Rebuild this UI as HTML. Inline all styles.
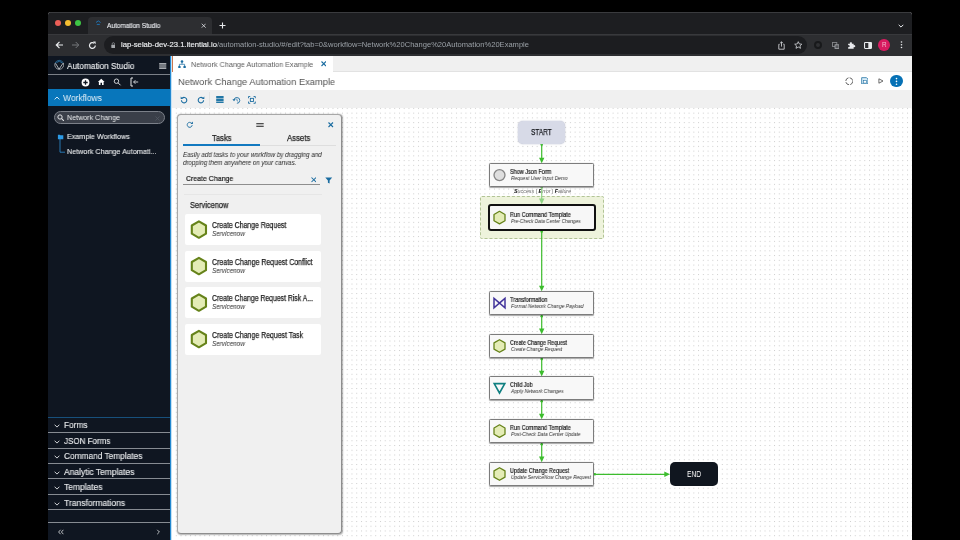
<!DOCTYPE html>
<html lang="en"><head><meta charset="utf-8"><title>Automation Studio</title>
<style>
*{box-sizing:border-box;margin:0;padding:0}
html,body{width:960px;height:540px;background:#000;overflow:hidden;font-family:"Liberation Sans",sans-serif}
.a{position:absolute}
.t{will-change:transform;position:absolute;white-space:nowrap;line-height:1;transform-origin:0 0}
#cv{background-color:#fff}
</style></head><body>
<div class="a" style="left:48.00px;top:12.00px;width:864.00px;height:528.00px;background:#f0f0f0;border-radius:3px 3px 0 0;"></div>
<div class="a" style="left:48.00px;top:12.00px;width:864.00px;height:22.40px;background:#1d1e21;border-radius:3px 3px 0 0;"></div>
<div class="a" style="left:48.00px;top:34.40px;width:864.00px;height:21.20px;background:#2d2e31;"></div>
<div class="a" style="left:48.00px;top:34.30px;width:864.00px;height:0.60px;background:#38393c;"></div>
<div class="a" style="left:50.00px;top:12.00px;width:860.00px;height:0.60px;background:#3a3b3e;"></div>
<div class="a" style="left:88.00px;top:17.30px;width:124.00px;height:17.20px;background:#2d2e31;border-radius:4px 4px 0 0;"></div>
<div class="a" style="left:54.55px;top:20.35px;width:6.10px;height:6.10px;background:#ec5f57;border-radius:50%;"></div>
<div class="a" style="left:64.95px;top:20.35px;width:6.10px;height:6.10px;background:#f4bd30;border-radius:50%;"></div>
<div class="a" style="left:75.35px;top:20.35px;width:6.10px;height:6.10px;background:#3ec544;border-radius:50%;"></div>
<svg class="a" style="left:95.30px;top:20.30px" width="6.60" height="6.70" viewBox="0 0 6 7"><path d="M0.6 2.6 L3 0.9 L5.4 2.6 M1.4 4.6 H4.6" stroke="#1e74b8" stroke-width="1" fill="none"/></svg>
<div class="t" style="left:106.70px;top:22.63px;font-size:6.7px;color:#e4e6ea;transform:scaleX(0.9735);-webkit-text-stroke:0.150px #e4e6ea;">Automation Studio</div>
<svg class="a" style="left:200.50px;top:22.60px" width="5.40" height="5.40" viewBox="0 0 6 6"><path d="M0.8 0.8 L5.2 5.2 M5.2 0.8 L0.8 5.2" stroke="#dfe1e5" stroke-width="0.9"/></svg>
<svg class="a" style="left:219.30px;top:21.70px" width="7.00" height="7.00" viewBox="0 0 7 7"><path d="M3.5 0.5 V6.5 M0.5 3.5 H6.5" stroke="#e8eaed" stroke-width="1.1"/></svg>
<svg class="a" style="left:897.50px;top:23.50px" width="6.00" height="4.00" viewBox="0 0 6 4"><path d="M0.7 0.8 L3 3.1 L5.3 0.8" stroke="#e8eaed" stroke-width="1" fill="none"/></svg>
<div class="a" style="left:104.00px;top:35.70px;width:703.00px;height:18.50px;background:#1c1d20;border-radius:9.200px;"></div>
<svg class="a" style="left:55.00px;top:40.60px" width="9.00" height="8.00" viewBox="0 0 9 8"><path d="M8 4 H1.5 M4.500 0.800 L1.300 4 L4.500 7.200" stroke="#eceef0" stroke-width="1.200" fill="none"/></svg>
<svg class="a" style="left:71.00px;top:40.50px" width="9.00" height="8.00" viewBox="0 0 9 8"><path d="M1 4 H7.5 M4.7 1 L7.7 4 L4.7 7" stroke="#77797d" stroke-width="1" fill="none"/></svg>
<svg class="a" style="left:88.20px;top:40.60px" width="9.00" height="9.00" viewBox="0 0 9 9"><path d="M7.3 4.5 A2.900 2.900 0 1 1 6.300 2.300" stroke="#eceef0" stroke-width="1.200" fill="none"/><path d="M5 0.600 H7.600 V3.200 Z" fill="#e8eaed"/></svg>
<svg class="a" style="left:110.50px;top:41.70px" width="4.70" height="6.10" viewBox="0 0 5 6.5"><rect x="0.300" y="2.800" width="4.400" height="3.500" rx="0.500" fill="#a4a7ab"/><path d="M1.300 2.800 V1.900 A1.200 1.200 0 0 1 3.700 1.900 V2.800" stroke="#a4a7ab" stroke-width="0.700" fill="none"/></svg>
<div class="t" style="left:120.80px;top:41.05px;font-size:7.5px;color:#eceef0;transform:scaleX(1.0223);-webkit-text-stroke:0.150px #eceef0;">iap-selab-dev-23.1.itential.io</div>
<div class="t" style="left:216.70px;top:41.05px;font-size:7.5px;color:#9aa0a6;transform:scaleX(1.0072);">/automation-studio/#/edit?tab=0&amp;workflow=Network%20Change%20Automation%20Example</div>
<svg class="a" style="left:777.50px;top:40.50px" width="7.00" height="9.00" viewBox="0 0 7 9"><path d="M1.600 3.300 H0.800 V8.200 H6.200 V3.300 H5.400 M3.500 5.600 V0.800 M2.100 2.200 L3.500 0.800 L4.900 2.200" stroke="#dfe1e5" stroke-width="0.800" fill="none"/></svg>
<svg class="a" style="left:793.50px;top:41.00px" width="8.50" height="8.00" viewBox="0 0 9 8.500"><path d="M4.500 0.700 L5.600 3.100 L8.300 3.400 L6.300 5.200 L6.900 7.800 L4.500 6.400 L2.100 7.800 L2.700 5.200 L0.700 3.400 L3.400 3.100 Z" stroke="#dfe1e5" stroke-width="0.800" fill="none"/></svg>
<div class="a" style="left:814.30px;top:41.00px;width:8.00px;height:8.00px;background:#2f3033;border-radius:50%;border:2px solid #18191b;"></div>
<svg class="a" style="left:831.50px;top:41.50px" width="7.50" height="7.00" viewBox="0 0 7.500 7"><rect x="0.500" y="0.500" width="4.300" height="4" fill="none" stroke="#85878b" stroke-width="0.900"/><rect x="3" y="2.800" width="4" height="3.700" fill="#55575b" stroke="#a9abaf" stroke-width="0.800"/></svg>
<svg class="a" style="left:847.00px;top:41.00px" width="8.50" height="8.00" viewBox="0 0 9 9"><path d="M1 3 H3 A1.200 1.200 0 1 1 5.200 3 H7.200 V4.800 A1.200 1.200 0 1 1 7.200 6.800 V8.600 H1 V6.600 A1.100 1.100 0 1 0 1 4.900 Z" fill="#e8eaed"/></svg>
<svg class="a" style="left:863.50px;top:41.50px" width="8.00" height="7.00" viewBox="0 0 8 7"><rect x="0.550" y="0.550" width="6.900" height="5.900" rx="0.600" fill="none" stroke="#e8eaed" stroke-width="1.100"/><rect x="4.300" y="0.550" width="3.150" height="5.900" fill="#e8eaed"/></svg>
<div class="a" style="left:878.40px;top:39.20px;width:11.60px;height:11.60px;background:#d81b60;border-radius:50%;"></div>
<div class="t" style="left:881.90px;top:41.87px;font-size:6.3px;color:#f3b9cd;transform:scaleX(1.0111);">R</div>
<svg class="a" style="left:899.50px;top:41.00px" width="3.00" height="7.50" viewBox="0 0 3 7.500"><circle cx="1.500" cy="1" r="0.800" fill="#e8eaed"/><circle cx="1.500" cy="3.750" r="0.800" fill="#e8eaed"/><circle cx="1.500" cy="6.500" r="0.800" fill="#e8eaed"/></svg>
<div class="a" style="left:48.00px;top:55.60px;width:122.00px;height:484.40px;background:#0f1621;"></div>
<div class="a" style="left:170.00px;top:55.60px;width:1.40px;height:484.40px;background:#2288d0;"></div>
<div class="a" style="left:171.40px;top:55.60px;width:0.90px;height:484.40px;background:#c4e1f5;"></div>
<svg class="a" style="left:53.50px;top:59.00px" width="10.50" height="11.50" viewBox="0 0 11 12"><path d="M1.200 4.200 A4.700 4.700 0 1 0 9.800 4.200" fill="none" stroke="#d5d8db" stroke-width="0.700"/><path d="M1.200 4.200 A4.700 4.700 0 0 1 9.800 4.200" fill="none" stroke="#2c6f9f" stroke-width="0.850"/><path d="M2.600 3.900 L5.500 2.300 L8.400 3.900" fill="none" stroke="#2c7fb8" stroke-width="0.800"/><path d="M1.700 4.600 L5.300 10.600 L9.600 4.200" fill="none" stroke="#e6e8ea" stroke-width="0.750"/></svg>
<div class="t" style="left:67.20px;top:60.59px;font-size:9.7px;color:#e9ebed;transform:scaleX(0.8515);-webkit-text-stroke:0.15px #e9ebed;">Automation Studio</div>
<svg class="a" style="left:159.00px;top:62.60px" width="7.50" height="6.00" viewBox="0 0 7.500 6"><path d="M0.200 0.900 H7.300 M0.200 3 H7.300 M0.200 5.100 H7.300" stroke="#d9dcdf" stroke-width="1.100"/></svg>
<div class="a" style="left:48.00px;top:74.20px;width:122.00px;height:1.00px;background:#7b8088;"></div>
<svg class="a" style="left:80.80px;top:77.50px" width="9.00" height="9.00" viewBox="0 0 9 9"><circle cx="4.500" cy="4.500" r="3.900" fill="#fff"/><path d="M4.500 2.300 V6.700 M2.300 4.500 H6.700" stroke="#0f1621" stroke-width="1.300"/></svg>
<svg class="a" style="left:97.30px;top:78.00px" width="8.50" height="7.60" viewBox="0 0 9 9"><path d="M4.500 0.800 L8.500 4.600 H7.300 V8.200 H5.400 V5.600 H3.600 V8.200 H1.700 V4.600 H0.500 Z" fill="#fff"/></svg>
<svg class="a" style="left:113.20px;top:78.20px" width="8.50" height="8.00" viewBox="0 0 9 9"><circle cx="3.600" cy="3.600" r="2.500" fill="none" stroke="#e6e8ea" stroke-width="1"/><path d="M5.500 5.500 L8.200 8.200" stroke="#e6e8ea" stroke-width="1.100"/></svg>
<svg class="a" style="left:129.50px;top:77.00px" width="9.00" height="10.00" viewBox="0 0 9 10"><path d="M3 1 H1 V9 H3" fill="none" stroke="#e6e8ea" stroke-width="1"/><path d="M8.200 5 H3.600 M5.400 3.200 L3.600 5 L5.400 6.800" fill="none" stroke="#c8cbcf" stroke-width="1"/></svg>
<div class="a" style="left:48.00px;top:89.30px;width:122.00px;height:16.50px;background:#0876bb;"></div>
<svg class="a" style="left:54.00px;top:96.00px" width="6.00" height="4.00" viewBox="0 0 6 4"><path d="M0.600 3.400 L3 1 L5.400 3.400" fill="none" stroke="#e9f3fa" stroke-width="0.900"/></svg>
<div class="t" style="left:63.30px;top:93.07px;font-size:9.6px;color:#e6f1f9;transform:scaleX(0.8822);">Workflows</div>
<div class="a" style="left:54.20px;top:111.30px;width:111.10px;height:12.90px;background:#3a3f49;border-radius:6.500px;border:1px solid #7b8089;"></div>
<svg class="a" style="left:56.80px;top:113.90px" width="7.50" height="7.50" viewBox="0 0 7 7"><circle cx="2.800" cy="2.800" r="2" fill="none" stroke="#e6e8ea" stroke-width="0.900"/><path d="M4.300 4.300 L6.500 6.500" stroke="#e6e8ea" stroke-width="1"/></svg>
<div class="t" style="left:66.70px;top:114.20px;font-size:7.8px;color:#eceef0;transform:scaleX(0.9123);">Network Change</div>
<svg class="a" style="left:155.00px;top:115.50px" width="5.00" height="5.00" viewBox="0 0 5 5"><path d="M0.500 0.500 L4.500 4.500 M4.500 0.500 L0.500 4.500" stroke="#565c66" stroke-width="0.700"/></svg>
<svg class="a" style="left:57.00px;top:134.00px" width="10.00" height="22.00" viewBox="0 0 10 22"><path d="M3 4.500 V18.200 H8" fill="none" stroke="#2d8fd6" stroke-width="0.800"/><path d="M0.900 0.800 H2.900 L3.400 1.300 H6.300 V5.200 H0.900 Z" fill="#2d9be6"/></svg>
<div class="t" style="left:67.20px;top:132.77px;font-size:7.6px;color:#e9ebed;transform:scaleX(0.9431);-webkit-text-stroke:0.11px #e9ebed;">Example Workflows</div>
<div class="t" style="left:67.20px;top:148.27px;font-size:7.6px;color:#e9ebed;transform:scaleX(0.9458);-webkit-text-stroke:0.11px #e9ebed;">Network Change Automati...</div>
<div class="a" style="left:48.00px;top:416.60px;width:122.00px;height:1.20px;background:#17507c;"></div>
<div class="t" style="left:63.70px;top:421.28px;font-size:9.0px;color:#e9ebed;transform:scaleX(0.9217);-webkit-text-stroke:0.14px #e9ebed;">Forms</div>
<svg class="a" style="left:54.00px;top:424.30px" width="6.00" height="4.00" viewBox="0 0 6 4"><path d="M0.600 0.700 L3 3.100 L5.400 0.700" fill="none" stroke="#e6e8ea" stroke-width="0.900"/></svg>
<div class="a" style="left:48.00px;top:432.10px;width:122.00px;height:1.00px;background:#868b92;"></div>
<div class="t" style="left:63.70px;top:436.78px;font-size:9.0px;color:#e9ebed;transform:scaleX(0.8904);-webkit-text-stroke:0.14px #e9ebed;">JSON Forms</div>
<svg class="a" style="left:54.00px;top:439.80px" width="6.00" height="4.00" viewBox="0 0 6 4"><path d="M0.600 0.700 L3 3.100 L5.400 0.700" fill="none" stroke="#e6e8ea" stroke-width="0.900"/></svg>
<div class="a" style="left:48.00px;top:447.55px;width:122.00px;height:1.00px;background:#868b92;"></div>
<div class="t" style="left:63.70px;top:452.28px;font-size:9.0px;color:#e9ebed;transform:scaleX(0.9249);-webkit-text-stroke:0.14px #e9ebed;">Command Templates</div>
<svg class="a" style="left:54.00px;top:455.30px" width="6.00" height="4.00" viewBox="0 0 6 4"><path d="M0.600 0.700 L3 3.100 L5.400 0.700" fill="none" stroke="#e6e8ea" stroke-width="0.900"/></svg>
<div class="a" style="left:48.00px;top:463.00px;width:122.00px;height:1.00px;background:#868b92;"></div>
<div class="t" style="left:63.70px;top:467.78px;font-size:9.0px;color:#e9ebed;transform:scaleX(0.9416);-webkit-text-stroke:0.14px #e9ebed;">Analytic Templates</div>
<svg class="a" style="left:54.00px;top:470.80px" width="6.00" height="4.00" viewBox="0 0 6 4"><path d="M0.600 0.700 L3 3.100 L5.400 0.700" fill="none" stroke="#e6e8ea" stroke-width="0.900"/></svg>
<div class="a" style="left:48.00px;top:478.45px;width:122.00px;height:1.00px;background:#868b92;"></div>
<div class="t" style="left:63.70px;top:483.28px;font-size:9.0px;color:#e9ebed;transform:scaleX(0.9386);-webkit-text-stroke:0.14px #e9ebed;">Templates</div>
<svg class="a" style="left:54.00px;top:486.30px" width="6.00" height="4.00" viewBox="0 0 6 4"><path d="M0.600 0.700 L3 3.100 L5.400 0.700" fill="none" stroke="#e6e8ea" stroke-width="0.900"/></svg>
<div class="a" style="left:48.00px;top:493.90px;width:122.00px;height:1.00px;background:#868b92;"></div>
<div class="t" style="left:63.70px;top:498.78px;font-size:9.0px;color:#e9ebed;transform:scaleX(0.9430);-webkit-text-stroke:0.14px #e9ebed;">Transformations</div>
<svg class="a" style="left:54.00px;top:501.80px" width="6.00" height="4.00" viewBox="0 0 6 4"><path d="M0.600 0.700 L3 3.100 L5.400 0.700" fill="none" stroke="#e6e8ea" stroke-width="0.900"/></svg>
<div class="a" style="left:48.00px;top:509.35px;width:122.00px;height:1.00px;background:#868b92;"></div>
<div class="a" style="left:48.00px;top:522.00px;width:122.00px;height:1.00px;background:#868b92;"></div>
<svg class="a" style="left:57.50px;top:528.50px" width="6.00" height="6.00" viewBox="0 0 6 6"><path d="M2.600 0.800 L0.600 3 L2.600 5.200 M5.400 0.800 L3.400 3 L5.400 5.200" fill="none" stroke="#e6e8ea" stroke-width="0.800"/></svg>
<svg class="a" style="left:156.00px;top:528.50px" width="5.00" height="6.00" viewBox="0 0 5 6"><path d="M1.200 0.800 L3.400 3 L1.200 5.200" fill="none" stroke="#e6e8ea" stroke-width="0.800"/></svg>
<div class="a" style="left:172.00px;top:55.60px;width:161.30px;height:16.30px;background:#fff;border-left:1.100px solid #c9774f;"></div>
<div class="a" style="left:333.30px;top:71.00px;width:578.70px;height:0.70px;background:#e2e2e2;"></div>
<div class="a" style="left:172.30px;top:71.70px;width:739.70px;height:18.10px;background:#fff;"></div>
<svg class="a" style="left:178.00px;top:59.50px" width="8.00" height="8.50" viewBox="0 0 8 8.500"><g fill="#1a6ca0"><circle cx="4" cy="1.500" r="1.300"/><circle cx="1.400" cy="7" r="1.300"/><circle cx="6.600" cy="7" r="1.300"/></g><path d="M4 2 V4.300 M1.400 6.500 V4.300 H6.600 V6.500" fill="none" stroke="#1a6ca0" stroke-width="0.700"/></svg>
<div class="t" style="left:191.30px;top:60.57px;font-size:7.6px;color:#5c5c5c;transform:scaleX(0.9531);">Network Change Automation Example</div>
<svg class="a" style="left:320.80px;top:61.30px" width="5.50" height="5.50" viewBox="0 0 5.500 5.500"><path d="M0.500 0.500 L5 5 M5 0.500 L0.500 5" stroke="#1a6ca0" stroke-width="1.100"/></svg>
<div class="t" style="left:178.00px;top:76.79px;font-size:9.7px;color:#525252;transform:scaleX(0.9597);">Network Change Automation Example</div>
<svg class="a" style="left:844.50px;top:76.50px" width="8.50" height="8.50" viewBox="0 0 8.500 8.500"><circle cx="4.250" cy="4.250" r="3.500" fill="none" stroke="#4d4d4d" stroke-width="0.850" stroke-dasharray="4.300 1.200"/></svg>
<svg class="a" style="left:860.60px;top:76.70px" width="7.60" height="7.60" viewBox="0 0 8 8"><path d="M0.700 0.700 H5.800 L7.300 2.200 V7.300 H0.700 Z" fill="#d8ecf8" stroke="#1a6ca0" stroke-width="0.800"/><rect x="2.400" y="3.600" width="3.200" height="2.800" fill="#fff" stroke="#1a6ca0" stroke-width="0.600"/></svg>
<svg class="a" style="left:877.50px;top:78.00px" width="6.00" height="6.00" viewBox="0 0 6 6"><path d="M0.900 0.800 L5 3 L0.900 5.200 Z" fill="none" stroke="#4a4a4a" stroke-width="0.800"/></svg>
<div class="a" style="left:890.00px;top:74.50px;width:12.60px;height:12.60px;background:#0671b5;border-radius:50%;"></div>
<svg class="a" style="left:894.80px;top:76.50px" width="3.00" height="9.00" viewBox="0 0 3 9"><circle cx="1.500" cy="1.600" r="0.800" fill="#fff"/><circle cx="1.500" cy="4.400" r="0.800" fill="#fff"/><circle cx="1.500" cy="7.200" r="0.800" fill="#fff"/></svg>
<svg class="a" style="left:180.30px;top:95.80px" width="8.00" height="8.00" viewBox="0 0 8 8"><path d="M1.400 4.300 A2.700 2.700 0 1 0 2.200 2.200" fill="none" stroke="#1a6ca0" stroke-width="1.100"/><path d="M0.700 0.600 V3.100 H3.200 Z" fill="#1a6ca0"/></svg>
<svg class="a" style="left:196.50px;top:95.80px" width="8.00" height="8.00" viewBox="0 0 8 8"><path d="M6.600 4.300 A2.700 2.700 0 1 1 5.800 2.200" fill="none" stroke="#1a6ca0" stroke-width="1.100"/><path d="M7.300 0.600 V3.100 H4.800 Z" fill="#1a6ca0"/></svg>
<div class="a" style="left:209.20px;top:92.00px;width:0.70px;height:14.00px;background:#e3e3e3;"></div>
<svg class="a" style="left:215.80px;top:95.60px" width="7.80" height="7.80" viewBox="0 0 8 8"><path d="M0.200 1.200 H7.800 M0.200 4 H7.800 M0.200 6.800 H7.800" stroke="#2277a6" stroke-width="2.200"/></svg>
<svg class="a" style="left:231.50px;top:95.50px" width="9.00" height="8.50" viewBox="0 0 9 8.500"><path d="M2 4 A2.900 2.900 0 1 1 4.900 7.300" fill="none" stroke="#1a6ca0" stroke-width="0.900"/><path d="M0.400 3.200 L2 5.200 L3.700 3.200 Z" fill="#1a6ca0"/><path d="M4.900 2.700 V4.500 L6.100 5.300" fill="none" stroke="#1a6ca0" stroke-width="0.700"/></svg>
<svg class="a" style="left:247.80px;top:95.80px" width="7.80" height="7.80" viewBox="0 0 8 8"><path d="M0.500 2.300 V0.500 H2.300 M5.700 0.500 H7.500 V2.300 M7.500 5.700 V7.500 H5.700 M2.300 7.500 H0.500 V5.700" fill="none" stroke="#1a6ca0" stroke-width="0.900"/><rect x="2.400" y="2.400" width="3.200" height="3.200" fill="none" stroke="#1a6ca0" stroke-width="0.900"/></svg>
<div class="a" id="cv" style="left:172.3px;top:107.6px;width:739.7px;height:432.4px"></div>
<svg class="a" style="left:0.00px;top:0.00px" width="960.00" height="540.00" viewBox="0 0 960 540"><defs><pattern id="dots" x="175.800" y="107.900" width="4.748" height="4.748" patternUnits="userSpaceOnUse"><rect x="0" y="0" width="1" height="1" fill="#cdcdcd"/></pattern></defs><rect x="172.300" y="107.600" width="739.700" height="432.400" fill="url(#dots)"/></svg>
<div class="a" style="left:480.30px;top:196.30px;width:123.50px;height:43.20px;background:#eef3dc;border:1px dashed #b2c496;border-radius:2px;"></div>
<svg class="a" style="left:0.00px;top:0.00px" width="960.00" height="540.00" viewBox="0 0 960 540"><path d="M541.7 143.8 V160.3" stroke="#3dbd2e" stroke-width="1.200" fill="none"/><path d="M539.0 157.70000000000002 H544.4000000000001 L541.7 163.3 Z" fill="#3dbd2e"/><circle cx="541.7" cy="144.60000000000002" r="1.300" fill="#3dbd2e"/><path d="M541.7 230.8 V288.3" stroke="#3dbd2e" stroke-width="1.200" fill="none"/><path d="M539.0 285.7 H544.4000000000001 L541.7 291.3 Z" fill="#3dbd2e"/><circle cx="541.7" cy="231.60000000000002" r="1.300" fill="#3dbd2e"/><path d="M541.7 315.40000000000003 V331.2" stroke="#3dbd2e" stroke-width="1.200" fill="none"/><path d="M539.0 328.59999999999997 H544.4000000000001 L541.7 334.2 Z" fill="#3dbd2e"/><circle cx="541.7" cy="316.20000000000005" r="1.300" fill="#3dbd2e"/><path d="M541.7 358.3 V373.4" stroke="#3dbd2e" stroke-width="1.200" fill="none"/><path d="M539.0 370.79999999999995 H544.4000000000001 L541.7 376.4 Z" fill="#3dbd2e"/><circle cx="541.7" cy="359.1" r="1.300" fill="#3dbd2e"/><path d="M541.7 400.5 V416.3" stroke="#3dbd2e" stroke-width="1.200" fill="none"/><path d="M539.0 413.7 H544.4000000000001 L541.7 419.3 Z" fill="#3dbd2e"/><circle cx="541.7" cy="401.3" r="1.300" fill="#3dbd2e"/><path d="M541.7 443.40000000000003 V459.2" stroke="#3dbd2e" stroke-width="1.200" fill="none"/><path d="M539.0 456.59999999999997 H544.4000000000001 L541.7 462.2 Z" fill="#3dbd2e"/><circle cx="541.7" cy="444.20000000000005" r="1.300" fill="#3dbd2e"/><path d="M594 474.3 H667" stroke="#3dbd2e" stroke-width="1.200"/><path d="M664.3 471.600 V477 L670 474.3 Z" fill="#3dbd2e"/><circle cx="594.8" cy="474.3" r="1.300" fill="#3dbd2e"/></svg>
<div class="a" style="left:518.30px;top:120.80px;width:47.00px;height:23.00px;background:#d7dae7;border-radius:5px;box-shadow:0 0 1.500px rgba(150,155,180,.8);"></div>
<div class="t" style="left:531.30px;top:128.27px;font-size:8.3px;color:#15171c;transform:scaleX(0.7829);-webkit-text-stroke:0.25px #15171c;">START</div>
<div class="a" style="left:670.00px;top:462.20px;width:47.50px;height:23.60px;background:#10161f;border-radius:5px;"></div>
<div class="t" style="left:686.70px;top:470.27px;font-size:8.3px;color:#fff;transform:scaleX(0.8046);">END</div>
<div class="t" style="left:514.20px;top:188.81px;font-size:5.3px;color:#666;transform:scaleX(1.0079);font-style:italic;"><b style="color:#111">S</b>uccess | <b style="color:#111">E</b>rror | <b style="color:#111">F</b>ailure</div>
<svg class="a" style="left:0.00px;top:0.00px" width="960.00" height="540.00" viewBox="0 0 960 540"><path d="M541.7 186.7 V201.2" stroke="#8ed383" stroke-width="1.200" fill="none"/><path d="M539.0 198.6 H544.4000000000001 L541.7 204.2 Z" fill="#8ed383"/><circle cx="541.7" cy="187.5" r="1.300" fill="#8ed383"/></svg>
<div class="a" style="left:489.40px;top:163.30px;width:104.90px;height:24.10px;background:#f8f8f8;border:0.800px solid #7c7c7c;border-radius:1.500px;box-shadow:0 0.800px 1px rgba(0,0,0,.35);"></div>
<svg class="a" style="left:0.00px;top:0.00px" width="960.00" height="540.00" viewBox="0 0 960 540"><circle cx="499.5" cy="175.10000000000002" r="5.500" fill="#dedede" stroke="#858585" stroke-width="1.300"/></svg>
<div class="t" style="left:510.40px;top:169.00px;font-size:6.5px;color:#1c1c1c;transform:scaleX(0.8469);-webkit-text-stroke:0.20px #1c1c1c;">Show Json Form</div>
<div class="t" style="left:511.20px;top:176.06px;font-size:5.6px;color:#2e2e2e;transform:scaleX(0.8773);font-style:italic;">Request User Input Demo</div>
<div class="a" style="left:487.60px;top:204.20px;width:108.40px;height:26.60px;background:#f7f7f7;border:2.200px solid #111;border-radius:3px;"></div>
<svg class="a" style="left:0.00px;top:0.00px" width="960.00" height="540.00" viewBox="0 0 960 540"><path d="M499.5 211.29999999999998 L505.0 214.45 V220.75 L499.5 223.9 L494.0 220.75 V214.45 Z" fill="#e4ecb6" stroke="#66831a" stroke-width="1.3" stroke-linejoin="round"/></svg>
<div class="t" style="left:510.40px;top:211.90px;font-size:6.5px;color:#1c1c1c;transform:scaleX(0.8471);-webkit-text-stroke:0.20px #1c1c1c;">Run Command Template</div>
<div class="t" style="left:511.20px;top:218.76px;font-size:5.6px;color:#2e2e2e;transform:scaleX(0.8470);font-style:italic;">Pre-Check Data Center Changes</div>
<div class="a" style="left:489.40px;top:291.30px;width:104.90px;height:24.10px;background:#f8f8f8;border:0.800px solid #7c7c7c;border-radius:1.500px;box-shadow:0 0.800px 1px rgba(0,0,0,.35);"></div>
<svg class="a" style="left:0.00px;top:0.00px" width="960.00" height="540.00" viewBox="0 0 960 540"><path d="M494.0 298.3 L499.5 303.1 L494.0 307.90000000000003 Z M505.0 298.3 L499.5 303.1 L505.0 307.90000000000003 Z" fill="none" stroke="#41339a" stroke-width="1.500"/></svg>
<div class="t" style="left:510.40px;top:297.00px;font-size:6.5px;color:#1c1c1c;transform:scaleX(0.8650);-webkit-text-stroke:0.20px #1c1c1c;">Transformation</div>
<div class="t" style="left:511.20px;top:304.06px;font-size:5.6px;color:#2e2e2e;transform:scaleX(0.8769);font-style:italic;">Format Network Change Payload</div>
<div class="a" style="left:489.40px;top:334.20px;width:104.90px;height:24.10px;background:#f8f8f8;border:0.800px solid #7c7c7c;border-radius:1.500px;box-shadow:0 0.800px 1px rgba(0,0,0,.35);"></div>
<svg class="a" style="left:0.00px;top:0.00px" width="960.00" height="540.00" viewBox="0 0 960 540"><path d="M499.5 339.7 L505.0 342.85 V349.15 L499.5 352.3 L494.0 349.15 V342.85 Z" fill="#e4ecb6" stroke="#66831a" stroke-width="1.3" stroke-linejoin="round"/></svg>
<div class="t" style="left:510.40px;top:339.90px;font-size:6.5px;color:#1c1c1c;transform:scaleX(0.8145);-webkit-text-stroke:0.20px #1c1c1c;">Create Change Request</div>
<div class="t" style="left:511.20px;top:346.96px;font-size:5.6px;color:#2e2e2e;transform:scaleX(0.8494);font-style:italic;">Create Change Request</div>
<div class="a" style="left:489.40px;top:376.40px;width:104.90px;height:24.10px;background:#f8f8f8;border:0.800px solid #7c7c7c;border-radius:1.500px;box-shadow:0 0.800px 1px rgba(0,0,0,.35);"></div>
<svg class="a" style="left:0.00px;top:0.00px" width="960.00" height="540.00" viewBox="0 0 960 540"><path d="M494.2 383.59999999999997 H504.8 L499.5 393.0 Z" fill="none" stroke="#0f7f80" stroke-width="1.600"/></svg>
<div class="t" style="left:510.40px;top:382.10px;font-size:6.5px;color:#1c1c1c;transform:scaleX(0.8340);-webkit-text-stroke:0.20px #1c1c1c;">Child Job</div>
<div class="t" style="left:511.20px;top:389.16px;font-size:5.6px;color:#2e2e2e;transform:scaleX(0.8739);font-style:italic;">Apply Network Changes</div>
<div class="a" style="left:489.40px;top:419.30px;width:104.90px;height:24.10px;background:#f8f8f8;border:0.800px solid #7c7c7c;border-radius:1.500px;box-shadow:0 0.800px 1px rgba(0,0,0,.35);"></div>
<svg class="a" style="left:0.00px;top:0.00px" width="960.00" height="540.00" viewBox="0 0 960 540"><path d="M499.5 424.8 L505.0 427.95000000000005 V434.25 L499.5 437.40000000000003 L494.0 434.25 V427.95000000000005 Z" fill="#e4ecb6" stroke="#66831a" stroke-width="1.3" stroke-linejoin="round"/></svg>
<div class="t" style="left:510.40px;top:425.00px;font-size:6.5px;color:#1c1c1c;transform:scaleX(0.8471);-webkit-text-stroke:0.20px #1c1c1c;">Run Command Template</div>
<div class="t" style="left:511.20px;top:432.06px;font-size:5.6px;color:#2e2e2e;transform:scaleX(0.8667);font-style:italic;">Post-Check Data Center Update</div>
<div class="a" style="left:489.40px;top:462.20px;width:104.90px;height:24.10px;background:#f8f8f8;border:0.800px solid #7c7c7c;border-radius:1.500px;box-shadow:0 0.800px 1px rgba(0,0,0,.35);"></div>
<svg class="a" style="left:0.00px;top:0.00px" width="960.00" height="540.00" viewBox="0 0 960 540"><path d="M499.5 467.7 L505.0 470.85 V477.15 L499.5 480.3 L494.0 477.15 V470.85 Z" fill="#e4ecb6" stroke="#66831a" stroke-width="1.3" stroke-linejoin="round"/></svg>
<div class="t" style="left:510.40px;top:467.90px;font-size:6.5px;color:#1c1c1c;transform:scaleX(0.8260);-webkit-text-stroke:0.20px #1c1c1c;">Update Change Request</div>
<div class="t" style="left:511.20px;top:474.96px;font-size:5.6px;color:#2e2e2e;transform:scaleX(0.8606);font-style:italic;">Update ServiceNow Change Request</div>
<div class="a" style="left:176.90px;top:114.30px;width:165.10px;height:420.10px;background:#f0f0f0;border:1px solid #a8a8a8;border-right-color:#8e8e8e;border-bottom-color:#8e8e8e;border-radius:4px;box-shadow:0.500px 0.500px 1.500px rgba(0,0,0,.3);"></div>
<svg class="a" style="left:185.50px;top:121.30px" width="7.50" height="7.50" viewBox="0 0 7.500 7.500"><path d="M6.200 4.100 A2.500 2.500 0 1 1 5.400 2" fill="none" stroke="#1a6ca0" stroke-width="0.900"/><path d="M6.900 0.500 V3 H4.400 Z" fill="#1a6ca0"/></svg>
<svg class="a" style="left:256.00px;top:122.60px" width="8.00" height="4.00" viewBox="0 0 8 4"><path d="M0.300 0.700 H7.700 M0.300 3.300 H7.700" stroke="#1a1a1a" stroke-width="1.100"/></svg>
<svg class="a" style="left:328.00px;top:122.20px" width="5.50" height="5.50" viewBox="0 0 5.500 5.500"><path d="M0.500 0.500 L5 5 M5 0.500 L0.500 5" stroke="#1a6ca0" stroke-width="1.100"/></svg>
<div class="t" style="left:211.70px;top:133.67px;font-size:8.3px;color:#222;transform:scaleX(0.9191);-webkit-text-stroke:0.25px #222;">Tasks</div>
<div class="t" style="left:286.70px;top:133.67px;font-size:8.3px;color:#222;transform:scaleX(0.9354);-webkit-text-stroke:0.25px #222;">Assets</div>
<div class="a" style="left:183.00px;top:144.70px;width:152.80px;height:0.70px;background:#dedede;"></div>
<div class="a" style="left:183.00px;top:143.80px;width:77.00px;height:1.90px;background:#1279c0;"></div>
<div class="t" style="left:183.30px;top:151.84px;font-size:6.8px;color:#262626;transform:scaleX(0.9197);font-style:italic;">Easily add tasks to your workflow by dragging and</div>
<div class="t" style="left:183.30px;top:160.14px;font-size:6.8px;color:#262626;transform:scaleX(0.9091);font-style:italic;">dropping them anywhere on your canvas.</div>
<div class="t" style="left:185.80px;top:175.04px;font-size:8.1px;color:#222;transform:scaleX(0.8592);-webkit-text-stroke:0.24px #222;">Create Change</div>
<svg class="a" style="left:310.80px;top:177.00px" width="5.50" height="5.50" viewBox="0 0 5.500 5.500"><path d="M0.500 0.500 L5 5 M5 0.500 L0.500 5" stroke="#1a6ca0" stroke-width="1.050"/></svg>
<svg class="a" style="left:325.00px;top:176.70px" width="7.50" height="7.00" viewBox="0 0 7.500 7"><path d="M0.300 0.600 H7.200 L4.600 3.600 V6.600 L2.900 5.800 V3.600 Z" fill="#1a6ca0"/></svg>
<div class="a" style="left:183.00px;top:184.30px;width:137.30px;height:0.80px;background:#8e8e8e;"></div>
<div class="a" style="left:184.00px;top:194.40px;width:138.00px;height:0.60px;background:#e6e6e6;"></div>
<div class="t" style="left:190.30px;top:200.59px;font-size:8.4px;color:#222;transform:scaleX(0.8867);-webkit-text-stroke:0.25px #222;">Servicenow</div>
<div class="a" style="left:185.30px;top:214.20px;width:136.00px;height:30.90px;background:#fff;border-radius:2px;"></div>
<svg class="a" style="left:0.00px;top:0.00px" width="960.00" height="540.00" viewBox="0 0 960 540"><path d="M198.9 221.4 L206.0 225.5 V233.7 L198.9 237.79999999999998 L191.8 233.7 V225.5 Z" fill="#e4ecb6" stroke="#66831a" stroke-width="2.1" stroke-linejoin="round"/></svg>
<div class="t" style="left:211.70px;top:221.09px;font-size:8.4px;color:#1c1c1c;transform:scaleX(0.8235);-webkit-text-stroke:0.25px #1c1c1c;">Create Change Request</div>
<div class="t" style="left:211.70px;top:231.04px;font-size:6.8px;color:#2a2a2a;transform:scaleX(0.9332);font-style:italic;">Servicenow</div>
<div class="a" style="left:185.30px;top:250.70px;width:136.00px;height:30.90px;background:#fff;border-radius:2px;"></div>
<svg class="a" style="left:0.00px;top:0.00px" width="960.00" height="540.00" viewBox="0 0 960 540"><path d="M198.9 257.9 L206.0 261.99999999999994 V270.2 L198.9 274.29999999999995 L191.8 270.2 V261.99999999999994 Z" fill="#e4ecb6" stroke="#66831a" stroke-width="2.1" stroke-linejoin="round"/></svg>
<div class="t" style="left:211.70px;top:257.59px;font-size:8.4px;color:#1c1c1c;transform:scaleX(0.8335);-webkit-text-stroke:0.25px #1c1c1c;">Create Change Request Conflict</div>
<div class="t" style="left:211.70px;top:267.54px;font-size:6.8px;color:#2a2a2a;transform:scaleX(0.9332);font-style:italic;">Servicenow</div>
<div class="a" style="left:185.30px;top:287.20px;width:136.00px;height:30.90px;background:#fff;border-radius:2px;"></div>
<svg class="a" style="left:0.00px;top:0.00px" width="960.00" height="540.00" viewBox="0 0 960 540"><path d="M198.9 294.4 L206.0 298.49999999999994 V306.7 L198.9 310.79999999999995 L191.8 306.7 V298.49999999999994 Z" fill="#e4ecb6" stroke="#66831a" stroke-width="2.1" stroke-linejoin="round"/></svg>
<div class="t" style="left:211.70px;top:294.09px;font-size:8.4px;color:#1c1c1c;transform:scaleX(0.8187);-webkit-text-stroke:0.25px #1c1c1c;">Create Change Request Risk A...</div>
<div class="t" style="left:211.70px;top:304.04px;font-size:6.8px;color:#2a2a2a;transform:scaleX(0.9332);font-style:italic;">Servicenow</div>
<div class="a" style="left:185.30px;top:323.70px;width:136.00px;height:30.90px;background:#fff;border-radius:2px;"></div>
<svg class="a" style="left:0.00px;top:0.00px" width="960.00" height="540.00" viewBox="0 0 960 540"><path d="M198.9 330.9 L206.0 334.99999999999994 V343.2 L198.9 347.29999999999995 L191.8 343.2 V334.99999999999994 Z" fill="#e4ecb6" stroke="#66831a" stroke-width="2.1" stroke-linejoin="round"/></svg>
<div class="t" style="left:211.70px;top:330.59px;font-size:8.4px;color:#1c1c1c;transform:scaleX(0.8297);-webkit-text-stroke:0.25px #1c1c1c;">Create Change Request Task</div>
<div class="t" style="left:211.70px;top:340.54px;font-size:6.8px;color:#2a2a2a;transform:scaleX(0.9332);font-style:italic;">Servicenow</div>
</body></html>
